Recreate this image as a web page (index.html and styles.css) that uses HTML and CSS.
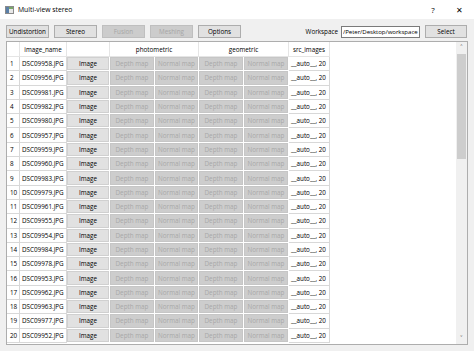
FILE: index.html
```html
<!DOCTYPE html>
<html lang="en">
<head>
    <meta charset="UTF-8">
    <title>Multi-view stereo</title>
    <link rel="stylesheet" href="styles.css">
</head>
<body>
    <div class="window">
        <div class="titlebar">
            <svg class="app-icon" width="9" height="8" viewBox="0 0 9 8">
                <rect x="0.5" y="0.5" width="8" height="7" fill="#e8e8e8" stroke="#8a8a8a"/>
                <rect x="1" y="1" width="3" height="6" fill="#5a7fa8"/>
                <rect x="4" y="1" width="4" height="2" fill="#7aa86a"/>
            </svg>
            <span class="title">Multi-view stereo</span>
            <span class="title-btn help">?</span>
            <span class="title-btn close">&#x2715;</span>
        </div>

        <div class="toolbar">
            <button class="btn">Undistortion</button>
            <button class="btn">Stereo</button>
            <button class="btn" disabled>Fusion</button>
            <button class="btn" disabled>Meshing</button>
            <button class="btn">Options</button>
            <span class="spacer"></span>
            <label class="ws-label">Workspace</label>
            <input class="ws-input" type="text" value="/Peter/Desktop/workspace">
            <button class="btn select">Select</button>
        </div>

        <div class="table-frame">
            <div class="table" id="table">
                <div class="hcell"></div>
                <div class="hcell">image_name</div>
                <div class="hcell"></div>
                <div class="hcell span2">photometric</div>
                <div class="hcell span2">geometric</div>
                <div class="hcell">src_images</div>
            </div>
            <div class="empty-area"></div>
            <div class="scrollbar">
                <div class="arrow">&#x2C4;</div>
                <div class="track">
                    <div class="thumb"></div>
                </div>
                <div class="arrow">&#x2C5;</div>
            </div>
        </div>
    </div>

    <script>
        // Image names shown in the table
        const names = [
            'DSC09958', 'DSC09956', 'DSC09981', 'DSC09982', 'DSC09980',
            'DSC09957', 'DSC09959', 'DSC09960', 'DSC09983', 'DSC09979',
            'DSC09961', 'DSC09955', 'DSC09954', 'DSC09984', 'DSC09978',
            'DSC09953', 'DSC09962', 'DSC09963', 'DSC09977', 'DSC09952'
        ];

        const table = document.getElementById('table');

        names.forEach((name, i) => {
            const cells = [
                `<div class="cell num">${i + 1}</div>`,
                `<div class="cell">${name}.JPG</div>`,
                `<div class="cell btn-cell"><button class="cbtn">Image</button></div>`,
                `<div class="cell btn-cell"><button class="cbtn" disabled>Depth map</button></div>`,
                `<div class="cell btn-cell"><button class="cbtn" disabled>Normal map</button></div>`,
                `<div class="cell btn-cell"><button class="cbtn" disabled>Depth map</button></div>`,
                `<div class="cell btn-cell"><button class="cbtn" disabled>Normal map</button></div>`,
                `<div class="cell">__auto__, 20</div>`
            ];
            table.insertAdjacentHTML('beforeend', cells.join(''));
        });
    </script>
</body>
</html>
```

FILE: styles.css
```css
* {
    box-sizing: border-box;
}

body {
    margin: 0;
    font-family: "Open Sans", "Noto Sans", sans-serif;
    font-size: 6.3px;
    color: #000;
    background-color: #f0f0f0;
}

.window {
    width: 474px;
    height: 351px;
    display: flex;
    flex-direction: column;
    overflow: hidden;
}

.titlebar {
    height: 19px;
    background-color: #fff;
    display: flex;
    align-items: center;
    padding-left: 5px;
}

.app-icon {
    margin-right: 4px;
}

.title {
    font-size: 6.8px;
    flex: 1;
}

.title-btn {
    width: 26px;
    text-align: center;
    font-size: 8px;
}

.close {
    margin-right: 2px;
}

.toolbar {
    height: 20px;
    display: flex;
    align-items: center;
    padding: 5px 7px 0 6px;
    gap: 5px;
}

.btn {
    width: 43px;
    height: 13px;
    padding: 0;
    font-family: inherit;
    font-size: 6.3px;
    color: #000;
    background-color: #e1e1e1;
    border: 1px solid #adadad;
}

.btn:disabled {
    color: #a6a6a6;
    background-color: #cccccc;
    border-color: #bfbfbf;
}

.spacer {
    flex: 1;
}

.ws-label {
    margin-right: -2px;
}

.ws-input {
    width: 79px;
    height: 12px;
    padding: 0 0 0 1px;
    font-family: inherit;
    font-size: 6.1px;
    letter-spacing: -0.05px;
    color: #000;
    border: 1px solid #7a7a7a;
    background-color: #fff;
}

.select {
    width: 42px;
}

.table-frame {
    margin: 2px 6px 0 6px;
    height: 304px;
    border: 1px solid #adadad;
    background-color: #fff;
    display: flex;
}

.table {
    display: grid;
    grid-template-columns: 13px 47px 43px 45px 44px 45px 45px 41px;
    grid-template-rows: 15px repeat(20, 14.3px);
    align-content: start;
}

.empty-area {
    flex: 1;
}

.hcell {
    display: flex;
    align-items: center;
    justify-content: center;
    border-right: 1px solid #e5e5e5;
    border-bottom: 1px solid #e5e5e5;
    background-color: #fff;
}

.span2 {
    grid-column: span 2;
}

.cell {
    display: flex;
    align-items: center;
    padding-left: 2px;
    color: #000;
    border-right: 1px solid #d8d8d8;
    border-bottom: 1px solid #d8d8d8;
    white-space: nowrap;
    overflow: hidden;
}

.num {
    padding-left: 3px;
    background-color: #fff;
}

.btn-cell {
    padding: 0;
    border-color: #fff;
}

.cbtn {
    width: 100%;
    height: 100%;
    padding: 0;
    font-family: inherit;
    font-size: 6.3px;
    color: #000;
    background-color: #e1e1e1;
    border: 1px solid #d0d0d0;
    white-space: nowrap;
}

.cbtn:disabled {
    color: #a8a8a8;
    background-color: #cdcdcd;
    border-color: #c6c6c6;
}

.scrollbar {
    width: 11px;
    display: flex;
    flex-direction: column;
    background-color: #f0f0f0;
}

.arrow {
    height: 11px;
    font-size: 8px;
    line-height: 11px;
    text-align: center;
    color: #606060;
}

.track {
    flex: 1;
}

.thumb {
    height: 105px;
    margin: 1px 1px 0 1px;
    background-color: #cdcdcd;
}
```
